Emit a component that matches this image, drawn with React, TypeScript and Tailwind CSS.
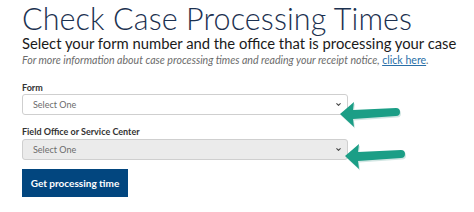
import { ChevronDown } from "lucide-react";

const Arrow = ({ className }: { className: string }) => (
  <svg className={className} width="64" height="28" viewBox="0 0 64 28">
    <path
      d="M2 13 L16 1 L15 9 L58 7 Q62 7 62 11 Q62 15 58 15 L15 18 L16 26 Z"
      fill="#7fb8ae"
      opacity="0.35"
      transform="translate(1 1.5)"
    />
    <path
      d="M2 13 L16 1 L15 9 L58 7 Q62 7 62 11 Q62 15 58 15 L15 18 L16 26 Z"
      fill="#1b9e86"
    />
  </svg>
);

const SelectBox = ({ gray }: { gray?: boolean }) => (
  <div
    className={`flex h-[21px] w-[326px] items-center justify-between rounded-[3px] border border-[#cfcfcf] pl-[10px] pr-[5px] ${
      gray ? "bg-[#ebebeb]" : "bg-white"
    }`}
  >
    <span className="text-[9px] text-[#6b6b6b]">Select One</span>
    <ChevronDown className="h-[7px] w-[7px] text-[#444]" strokeWidth={3.5} />
  </div>
);

export default function App() {
  return (
    <div className="relative h-[212px] w-[474px] overflow-hidden bg-white pl-[22px] font-['Lato',sans-serif]">
      <h1 className="text-[30.5px] font-light leading-[36px] tracking-[0.1px] text-[#1c3150]">
        Check Case Processing Times
      </h1>
      <p className="-mt-[1px] text-[14.8px] leading-[17px] text-[#1a1a1a]">
        Select your form number and the office that is processing your case
      </p>
      <p className="mt-[2px] text-[10.6px] italic leading-[13px] text-[#6b6b6b]">
        For more information about case processing times and reading your receipt notice,{" "}
        <span className="not-italic text-[#2a6fa8] underline">click here</span>.
      </p>

      <div className="mt-[15px] text-[9px] font-bold leading-[11px] text-[#333]">Form</div>
      <div className="mt-[1px]">
        <SelectBox />
      </div>
      <div className="mt-[11px] text-[9px] font-bold leading-[11px] text-[#333]">
        Field Office or Service Center
      </div>
      <div className="mt-[2px]">
        <SelectBox gray />
      </div>
      <button className="mt-[9px] flex h-[28px] w-[106px] items-center justify-center bg-[#02467f] text-[10px] font-bold text-white">
        Get processing time
      </button>

      <Arrow className="absolute left-[338px] top-[101px]" />
      <Arrow className="absolute left-[343px] top-[143px]" />
    </div>
  );
}
